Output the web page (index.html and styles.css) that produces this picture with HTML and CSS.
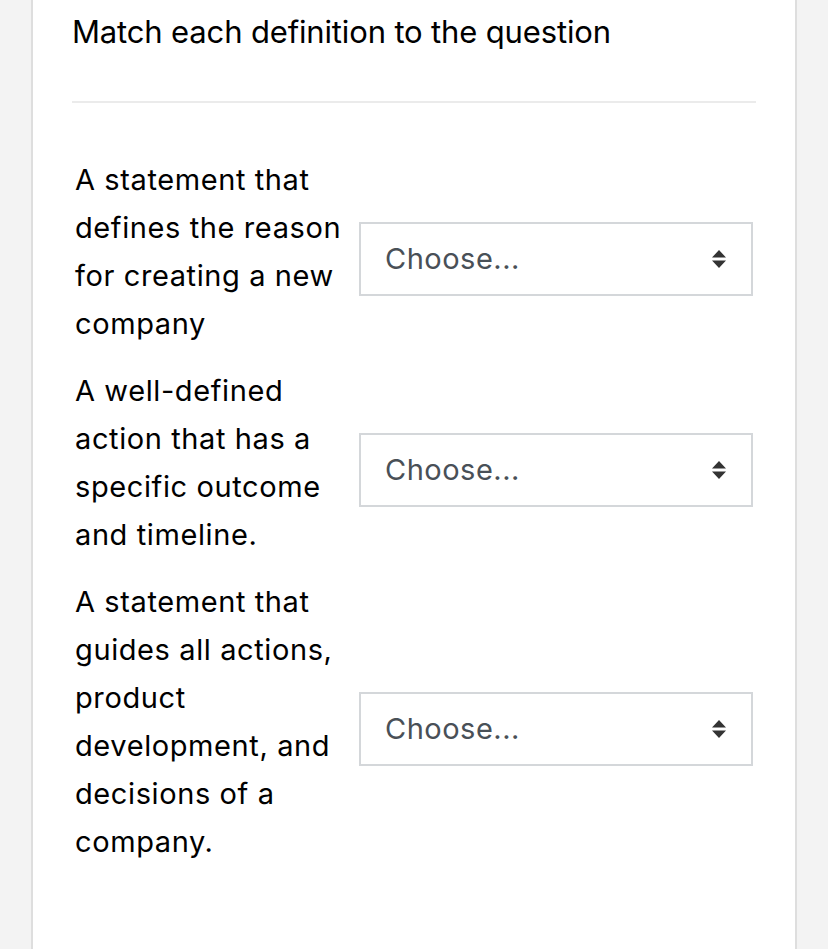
FILE: index.html
```html
<!DOCTYPE html>
<html>
<head>
<meta charset="utf-8">
<link rel="stylesheet" href="styles.css">
</head>
<body>
<div class="card">
  <h1 class="title">Match each definition to the question</h1>
  <div class="rule"></div>
  <div class="rows">
    <div class="row">
      <div class="text">A statement that defines the reason for creating a new company</div>
      <div class="select"><span class="choose">Choose...</span>
        <svg class="arrows" width="16" height="20" viewBox="0 0 16 20"><path d="M8 1 L15 8.5 L1 8.5 Z M1 11.5 L15 11.5 L8 19 Z" fill="#333"/></svg>
      </div>
    </div>
    <div class="row">
      <div class="text">A well-defined action that has a specific outcome and timeline.</div>
      <div class="select"><span class="choose">Choose...</span>
        <svg class="arrows" width="16" height="20" viewBox="0 0 16 20"><path d="M8 1 L15 8.5 L1 8.5 Z M1 11.5 L15 11.5 L8 19 Z" fill="#333"/></svg>
      </div>
    </div>
    <div class="row">
      <div class="text">A statement that guides all actions, product development, and decisions of a company.</div>
      <div class="select"><span class="choose">Choose...</span>
        <svg class="arrows" width="16" height="20" viewBox="0 0 16 20"><path d="M8 1 L15 8.5 L1 8.5 Z M1 11.5 L15 11.5 L8 19 Z" fill="#333"/></svg>
      </div>
    </div>
  </div>
</div>
</body>
</html>
```
FILE: styles.css
```css
html, body {
  margin: 0;
  padding: 0;
  background: #f3f3f3;
}
body {
  font-family: Inter, "Noto Sans", sans-serif;
  color: #000;
}
.card {
  margin-left: 31px;
  width: 766px;
  min-height: 949px;
  background: #fff;
  border-left: 2px solid #dedede;
  border-right: 2px solid #dedede;
  padding: 0 39px;
  box-sizing: border-box;
}
.title {
  margin: 0;
  padding-top: 14px;
  font-size: 31px;
  font-weight: 400;
  line-height: 36px;
  letter-spacing: -0.15px;
}
.rule {
  margin-top: 51px;
  height: 2px;
  background: #ebebeb;
}
.rows {
  padding-top: 53px;
  padding-left: 3px;
  padding-right: 3px;
}
.row {
  display: flex;
  align-items: center;
  margin-bottom: 19px;
}
.text {
  width: 284px;
  font-size: 29px;
  line-height: 48px;
  letter-spacing: 0.6px;
  padding-bottom: 15px;
  margin-bottom: -15px;
}
.select {
  margin-top: 13px;
  width: 394px;
  height: 74px;
  box-sizing: border-box;
  border: 2px solid #d4d7da;
  display: flex;
  align-items: center;
  justify-content: space-between;
  padding: 0 24px 0 24px;
}
.choose {
  font-size: 29px;
  letter-spacing: 0.5px;
  color: #495057;
}
.arrows {
  display: block;
}
```
